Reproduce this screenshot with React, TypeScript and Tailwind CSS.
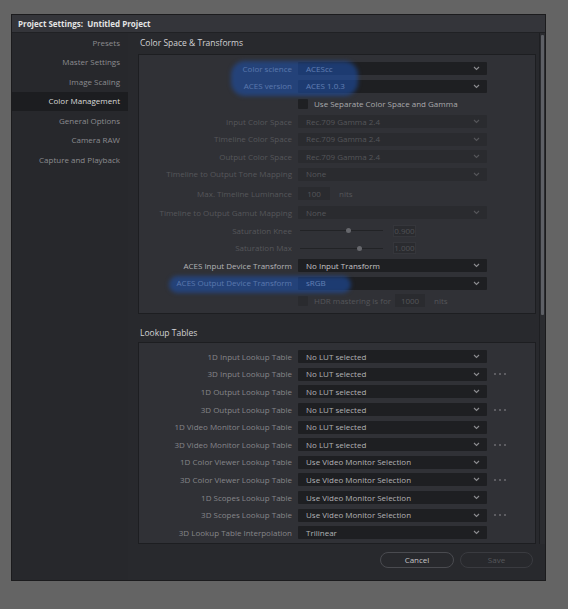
import React from 'react';

type Tone = 'active' | 'dim' | 'lut';

const labelColor: Record<Tone, string> = {
  active: 'text-[#b4b4b7]',
  dim: 'text-[#56575b]',
  lut: 'text-[#86868a]',
};

function Chevron({ dim }: { dim?: boolean }) {
  return (
    <svg width="7" height="5" viewBox="0 0 7 5" className="shrink-0">
      <polyline
        points="1,1 3.5,3.5 6,1"
        fill="none"
        stroke={dim ? '#55565a' : '#8c8c90'}
        strokeWidth="1.1"
      />
    </svg>
  );
}

function Dropdown({ value, tone }: { value: string; tone: Tone }) {
  const dim = tone === 'dim';
  return (
    <div
      className={
        dim
          ? 'ml-[6px] w-[189px] h-[13px] flex items-center justify-between pl-[8px] pr-[7px] bg-[#2a2b2f] text-[#55565a] rounded-[1px]'
          : tone === 'lut'
          ? 'ml-[6px] w-[189px] h-[13px] flex items-center justify-between pl-[8px] pr-[7px] bg-[#1e1f22] text-[#b2b2b5] rounded-[1px]'
          : 'ml-[6px] w-[189px] h-[13px] flex items-center justify-between pl-[8px] pr-[7px] bg-[#1e1f22] text-[#c4c4c6] rounded-[1px]'
      }
    >
      <span>{value}</span>
      <Chevron dim={dim} />
    </div>
  );
}

function Row({
  label,
  tone,
  children,
  tall,
}: {
  label?: string;
  tone: Tone;
  children: React.ReactNode;
  tall?: boolean;
}) {
  return (
    <div className={tall ? 'flex items-center h-[21px]' : 'flex items-center h-[17.6px]'}>
      <div className={`w-[153px] text-right shrink-0 ${labelColor[tone]}`}>{label}</div>
      {children}
    </div>
  );
}

function Dots() {
  return (
    <div className="ml-[7px] flex gap-[3px]">
      <div className="w-[2px] h-[2px] rounded-full bg-[#6c6d72]" />
      <div className="w-[2px] h-[2px] rounded-full bg-[#6c6d72]" />
      <div className="w-[2px] h-[2px] rounded-full bg-[#6c6d72]" />
    </div>
  );
}

function Slider({ pos, value }: { pos: number; value: string }) {
  return (
    <>
      <div className="relative ml-[8px] w-[83px] h-[1px] bg-[#222326]">
        <div
          className="absolute top-[-2px] w-[5px] h-[5px] rounded-full bg-[#66676c]"
          style={{ left: pos }}
        />
      </div>
      <div className="ml-[10px] w-[23px] h-[12px] flex items-center justify-center bg-[#2a2b2f] border border-[#35363b] text-[#505155]">
        {value}
      </div>
    </>
  );
}

const sidebar = [
  'Presets',
  'Master Settings',
  'Image Scaling',
  'Color Management',
  'General Options',
  'Camera RAW',
  'Capture and Playback',
];

const luts: [string, string, boolean][] = [
  ['1D Input Lookup Table', 'No LUT selected', false],
  ['3D Input Lookup Table', 'No LUT selected', true],
  ['1D Output Lookup Table', 'No LUT selected', false],
  ['3D Output Lookup Table', 'No LUT selected', true],
  ['1D Video Monitor Lookup Table', 'No LUT selected', false],
  ['3D Video Monitor Lookup Table', 'No LUT selected', true],
  ['1D Color Viewer Lookup Table', 'Use Video Monitor Selection', false],
  ['3D Color Viewer Lookup Table', 'Use Video Monitor Selection', true],
  ['1D Scopes Lookup Table', 'Use Video Monitor Selection', false],
  ['3D Scopes Lookup Table', 'Use Video Monitor Selection', true],
  ['3D Lookup Table Interpolation', 'Trilinear', false],
];

export default function App() {
  return (
    <div className="w-[568px] h-[609px] bg-[#646464] pt-[14px] pl-[11px] font-['Open_Sans',sans-serif] text-[8px] leading-none">
      <div className="w-[535px] h-[567px] bg-[#28292d] flex flex-col border border-[#1b1b1d]">
        {/* title bar */}
        <div className="h-[18px] shrink-0 bg-[#34353a] border-b border-[#202124] flex items-center pl-[6px] text-[#e4e4e4] font-bold whitespace-pre">
          Project Settings:  Untitled Project
        </div>

        <div className="flex flex-1 min-h-0">
          {/* sidebar */}
          <div className="w-[116px] shrink-0 bg-[#27282c]">
            {sidebar.map((s) => (
              <div
                key={s}
                className={
                  s === 'Color Management'
                    ? 'h-[19.5px] flex items-center justify-end pr-[8px] bg-[#1c1d20] text-[#dadada]'
                    : 'h-[19.5px] flex items-center justify-end pr-[8px] text-[#8c8c90]'
                }
              >
                {s}
              </div>
            ))}
          </div>

          {/* main */}
          <div className="flex-1 flex flex-col">
            <div className="flex h-[511px] shrink-0">
              <div className="flex-1 pl-[10px] pr-[3px] overflow-hidden">
                <div className="h-[21px] flex items-center pl-[2px] text-[#d2d2d4] text-[8.5px]">
                  Color Space &amp; Transforms
                </div>

                {/* color space box */}
                <div className="relative h-[260px] bg-[#303136] border border-[#1d1e21] pt-[5px]">
                  <Row label="Color science" tone="active">
                    <Dropdown value="ACEScc" tone="active" />
                  </Row>
                  <Row label="ACES version" tone="active">
                    <Dropdown value="ACES 1.0.3" tone="active" />
                  </Row>
                  <Row tone="active">
                    <div className="ml-[6px] w-[10px] h-[10px] bg-[#1f2023] rounded-[1px]" />
                    <span className="ml-[6px] text-[#a9a9ac]">Use Separate Color Space and Gamma</span>
                  </Row>
                  <Row label="Input Color Space" tone="dim">
                    <Dropdown value="Rec.709 Gamma 2.4" tone="dim" />
                  </Row>
                  <Row label="Timeline Color Space" tone="dim">
                    <Dropdown value="Rec.709 Gamma 2.4" tone="dim" />
                  </Row>
                  <Row label="Output Color Space" tone="dim">
                    <Dropdown value="Rec.709 Gamma 2.4" tone="dim" />
                  </Row>
                  <Row label="Timeline to Output Tone Mapping" tone="dim">
                    <Dropdown value="None" tone="dim" />
                  </Row>
                  <Row label="Max. Timeline Luminance" tone="dim" tall>
                    <div className="ml-[6px] w-[32px] h-[13px] flex items-center justify-center bg-[#2a2b2f] text-[#55565a]">
                      100
                    </div>
                    <span className="ml-[9px] text-[#55565a]">nits</span>
                  </Row>
                  <Row label="Timeline to Output Gamut Mapping" tone="dim">
                    <Dropdown value="None" tone="dim" />
                  </Row>
                  <Row label="Saturation Knee" tone="dim">
                    <Slider pos={46} value="0.900" />
                  </Row>
                  <Row label="Saturation Max" tone="dim">
                    <Slider pos={57} value="1.000" />
                  </Row>
                  <Row label="ACES Input Device Transform" tone="active">
                    <Dropdown value="No Input Transform" tone="active" />
                  </Row>
                  <Row label="ACES Output Device Transform" tone="active">
                    <Dropdown value="sRGB" tone="active" />
                  </Row>
                  <Row tone="dim">
                    <div className="ml-[6px] w-[10px] h-[10px] bg-[#2a2b2f] rounded-[1px]" />
                    <span className="ml-[6px] text-[#55565a]">HDR mastering is for</span>
                    <div className="ml-[4px] w-[30px] h-[13px] flex items-center justify-center bg-[#2a2b2f] text-[#55565a]">
                      1000
                    </div>
                    <span className="ml-[9px] text-[#55565a]">nits</span>
                  </Row>

                  {/* highlighter marks */}
                  <div className="pointer-events-none absolute left-[92px] top-[6px] w-[127px] h-[35px] rounded-[14px] bg-[#1d4fa6]/60 blur-[2px]" />
                  <div className="pointer-events-none absolute left-[30px] top-[221px] w-[182px] h-[17px] rounded-[9px] bg-[#1d4fa6]/60 blur-[2px]" />
                </div>

                <div className="h-[28px] pt-[10px] flex items-center pl-[2px] text-[#d2d2d4] text-[8.5px]">
                  Lookup Tables
                </div>

                {/* lookup box */}
                <div className="h-[202px] bg-[#303136] border border-[#1d1e21] pt-[5px]">
                  {luts.map(([l, v, dots]) => (
                    <Row key={l} label={l} tone="lut">
                      <Dropdown value={v} tone="lut" />
                      {dots && <Dots />}
                    </Row>
                  ))}
                </div>
              </div>

              {/* scrollbar */}
              <div className="w-[6px] shrink-0 bg-[#2b2c30] border-l border-[#1e1f22]">
                <div className="mt-[2px] ml-[1px] w-[3px] h-[280px] rounded-[1px] bg-[#5e6066]" />
              </div>
            </div>

            {/* footer */}
            <div className="flex-1 flex justify-end items-start gap-[6px] pt-[8px] pr-[12px]">
              <div className="w-[74px] h-[16px] rounded-full border border-[#4a4b50] flex items-center justify-center text-[#c4c4c6]">
                Cancel
              </div>
              <div className="w-[73px] h-[16px] rounded-full border border-[#3a3b40] flex items-center justify-center text-[#56575b]">
                Save
              </div>
            </div>
          </div>
        </div>
      </div>
    </div>
  );
}
